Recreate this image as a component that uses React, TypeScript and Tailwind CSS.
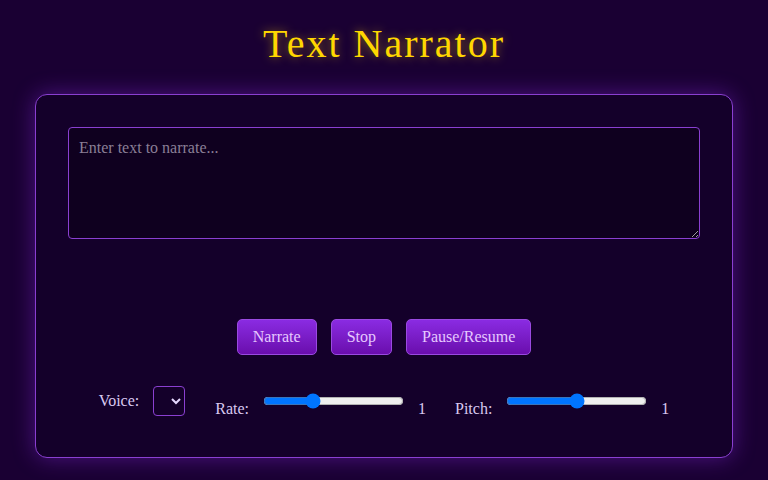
export default function App() {
  return (
    <div className="min-h-[480px] w-full bg-[#1a0033] px-[35px] pt-5 pb-5 font-['Liberation_Serif',serif] text-[#d8c8f0]">
      <h1 className="text-center text-[40px] leading-[48px] tracking-[2px] text-[#ffd700] [text-shadow:0_0_10px_rgba(255,215,0,0.5)]">
        Text Narrator
      </h1>

      <div className="mt-[26px] rounded-xl border border-[#8a3fd1] bg-[#14002a] px-8 pt-8 pb-9 shadow-[0_0_22px_rgba(138,43,226,0.45)]">
        <textarea
          placeholder="Enter text to narrate..."
          className="block h-[112px] w-full rounded border border-[#8a3fd1] bg-[#0f001f] px-[10px] py-2 text-base text-[#e6d8ff] placeholder:text-[#8a7f96] focus:outline-none"
        />

        {/* buttons */}
        <div className="mt-20 flex justify-center gap-[14px]">
          {["Narrate", "Stop", "Pause/Resume"].map((label) => (
            <button
              key={label}
              className="h-9 rounded-[5px] border border-[#9a4ae0] bg-gradient-to-b from-[#8a2be2] to-[#6a0dad] px-[15px] text-base text-[#e6c8ff]"
            >
              {label}
            </button>
          ))}
        </div>

        {/* controls */}
        <div className="mt-[26px] flex items-center justify-center text-base">
          <label className="flex items-center gap-[14px]">
            <span>Voice:</span>
            <select className="h-[30px] w-8 rounded border border-[#8a3fd1] bg-[#14002a] text-[#e6d8ff]" />
          </label>

          <div className="ml-[30px] flex items-center gap-[14px]">
            <span className="pt-4">Rate:</span>
            <input type="range" min={0.5} max={2} step={0.1} defaultValue={1} className="w-[141px]" />
            <span className="pt-4">1</span>
          </div>

          <div className="ml-[29px] flex items-center gap-[14px]">
            <span className="pt-4">Pitch:</span>
            <input type="range" min={0} max={2} step={0.1} defaultValue={1} className="w-[141px]" />
            <span className="pt-4">1</span>
          </div>
        </div>
      </div>
    </div>
  );
}
